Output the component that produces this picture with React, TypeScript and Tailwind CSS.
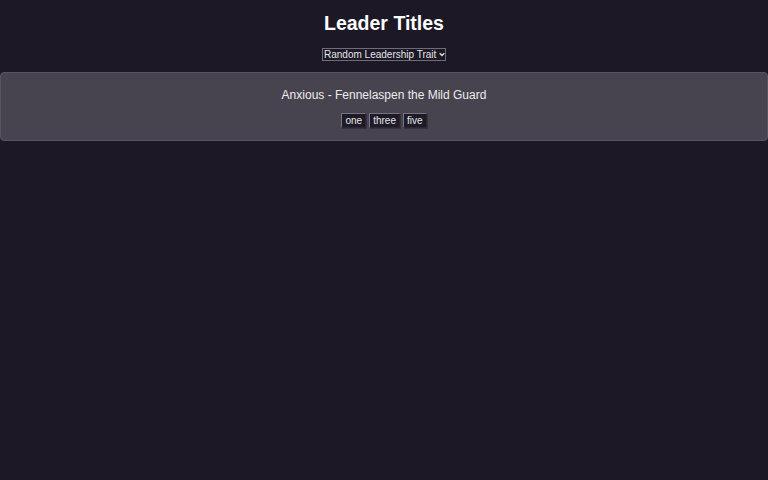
export default function App() {
  return (
    <div className="min-h-[480px] bg-[#1c1826] text-white font-['Liberation_Sans',Arial,sans-serif]">
      <div className="flex flex-col items-center pt-[12px]">
        <h1 className="text-[19.5px] leading-[22px] font-bold">Leader Titles</h1>
        <div className="relative flex mt-[14px]">
          <select className="appearance-none h-[13px] bg-[#1c1826] border border-[#6f6b78] text-[10px] leading-[11px] text-[#e6e6e6] pl-[1px] pr-[8px] outline-none">
            <option>Random Leadership Trait</option>
          </select>
          <svg
            className="absolute right-[1px] top-[4px] pointer-events-none"
            width="6"
            height="5"
            viewBox="0 0 6 5"
          >
            <path d="M0.7 1.2 L3 3.5 L5.3 1.2" fill="none" stroke="#e6e6e6" strokeWidth="1.3" />
          </svg>
        </div>
      </div>
      <div className="mt-[11px] h-[69px] rounded-[4px] border border-[#57535f] bg-[#48444f] flex flex-col items-center pt-[15px]">
        <p className="text-[12px] leading-[14px] text-[#ececec]">Anxious - Fennelaspen the Mild Guard</p>
        <div className="mt-[11px] flex gap-[3px]">
          {["one", "three", "five"].map((t) => (
            <button
              key={t}
              className="h-[15px] px-[3px] bg-[#1e1a28] text-[10px] leading-[12px] text-[#e6e6e6] border border-t-[#77737f] border-l-[#77737f] border-b-[#2a2632] border-r-[#2a2632] shadow-[1px_1px_0_#35313d]"
            >
              {t}
            </button>
          ))}
        </div>
      </div>
    </div>
  );
}
